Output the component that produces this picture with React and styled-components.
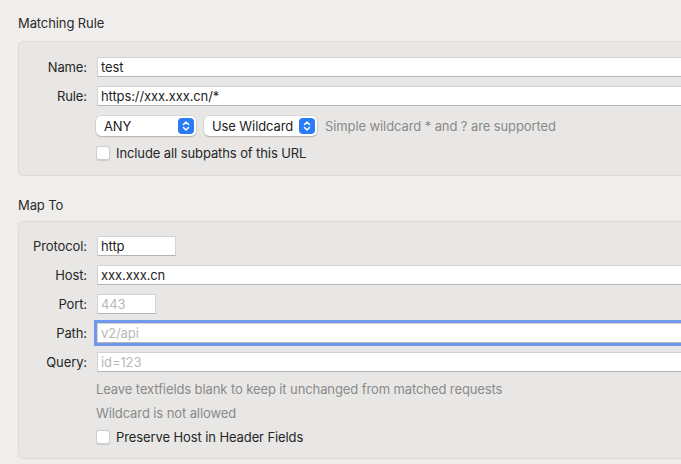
import React from "react";
import styled, { createGlobalStyle } from "styled-components";

const GlobalStyle = createGlobalStyle`
  html, body {
    margin: 0;
    padding: 0;
    background: #efeeec;
    overflow: hidden;
  }
  body {
    font-family: "Inter", "Liberation Sans", "Noto Sans", sans-serif;
    font-size: 13px;
    letter-spacing: -0.1px;
    color: #262626;
    -webkit-font-smoothing: antialiased;
  }
`;

const Page = styled.div`
  box-sizing: border-box;
  width: 100vw;
  height: 100vh;
  overflow: hidden;
  padding: 14px 0 0 18px;
`;

const SectionTitle = styled.div`
  height: 18px;
  line-height: 18px;
  font-size: 13px;
  color: #2b2b2b;
  margin-bottom: ${(p) => p.gap || 9}px;
`;

/* the panels run on past the right edge of the window */
const Panel = styled.div`
  width: calc(100% + 40px);
  box-sizing: border-box;
  background: #e8e7e5;
  border: 1px solid #dcdbd9;
  border-radius: 5px;
  padding: ${(p) => p.pad || "15px 0 14px"};
  margin-bottom: ${(p) => p.mb || 0}px;
  display: flex;
  flex-direction: column;
`;

const Row = styled.div`
  display: flex;
  align-items: center;
  height: ${(p) => p.h || 20}px;
  margin-top: ${(p) => (p.mt === undefined ? 9 : p.mt)}px;
  &:first-child {
    margin-top: 0;
  }
`;

const Label = styled.label`
  width: 68px;
  flex: none;
  text-align: right;
  margin-right: 10px;
  color: #262626;
  font-size: 13px;
`;

const Indent = styled.div`
  width: 77px;
  flex: none;
`;

const TextField = styled.input`
  box-sizing: border-box;
  height: 20px;
  width: ${(p) => (p.w ? `${p.w}px` : "auto")};
  flex: ${(p) => (p.w ? "none" : "1")};
  margin: 0;
  padding: 0 3px 0 3px;
  background: #ffffff;
  border: 1px solid #d4d3d1;
  border-bottom-color: #b5b4b2;
  border-radius: 0;
  font-family: inherit;
  font-size: 13px;
  letter-spacing: -0.1px;
  color: #1f1f1f;
  outline: none;
  box-shadow: ${(p) => (p.focused ? "0 0 0 3px #7199ea" : "none")};
  &::placeholder {
    color: #b9b9b9;
  }
`;

const PopUp = styled.div`
  box-sizing: border-box;
  width: ${(p) => p.w}px;
  height: 20px;
  margin-left: ${(p) => p.ml || 0}px;
  display: flex;
  align-items: center;
  justify-content: space-between;
  padding: 0 2px 0 8px;
  background: #ffffff;
  border-radius: 5px;
  box-shadow: 0 0 0 0.5px rgba(0, 0, 0, 0.12), 0 1px 1.5px rgba(0, 0, 0, 0.18);
  color: #222;
  font-size: 13px;
`;

const Stepper = styled.span`
  width: 16px;
  height: 16px;
  border-radius: 4px;
  background: #2a7cf6;
  display: flex;
  align-items: center;
  justify-content: center;
`;

const Hint = styled.span`
  color: #8a8a8a;
  font-size: 13px;
  margin-left: ${(p) => p.ml || 0}px;
  white-space: nowrap;
`;

const CheckRow = styled.label`
  display: flex;
  align-items: center;
  gap: 6px;
  font-size: 13px;
  color: #262626;
`;

const Box = styled.span`
  box-sizing: border-box;
  width: 14px;
  height: 14px;
  border-radius: 3px;
  background: #ffffff;
  border: 1px solid #cfcecc;
  box-shadow: 0 0.5px 1px rgba(0, 0, 0, 0.12);
`;

function Chevrons() {
  return (
    <svg width="10" height="12" viewBox="0 0 10 12" fill="none">
      <path
        d="M2.5 4.5 L5 2 L7.5 4.5"
        stroke="#fff"
        strokeWidth="1.5"
        strokeLinecap="round"
        strokeLinejoin="round"
      />
      <path
        d="M2.5 7.5 L5 10 L7.5 7.5"
        stroke="#fff"
        strokeWidth="1.5"
        strokeLinecap="round"
        strokeLinejoin="round"
      />
    </svg>
  );
}

function Select({ value, w, ml }) {
  return (
    <PopUp w={w} ml={ml}>
      <span>{value}</span>
      <Stepper>
        <Chevrons />
      </Stepper>
    </PopUp>
  );
}

function Field({ label, ...rest }) {
  return (
    <Row>
      <Label>{label}</Label>
      <TextField {...rest} />
    </Row>
  );
}

export default function App() {
  return (
    <Page>
      <GlobalStyle />
      <SectionTitle>Matching Rule</SectionTitle>
      <Panel mb={20}>
        <Field label="Name:" defaultValue="test" />
        <Field label="Rule:" defaultValue="https://xxx.xxx.cn/*" />
        <Row mt={10}>
          <Indent />
          <Select value="ANY" w={100} />
          <Select value="Use Wildcard" w={113} ml={8} />
          <Hint ml={8}>Simple wildcard * and ? are supported</Hint>
        </Row>
        <Row h={16} mt={9}>
          <Indent />
          <CheckRow>
            <Box />
            Include all subpaths of this URL
          </CheckRow>
        </Row>
      </Panel>

      <SectionTitle gap={7}>Map To</SectionTitle>
      <Panel pad="14px 0 13px">
        <Field label="Protocol:" defaultValue="http" w={79} />
        <Field label="Host:" defaultValue="xxx.xxx.cn" />
        <Field label="Port:" placeholder="443" w={59} />
        <Field label="Path:" placeholder="v2/api" focused />
        <Field label="Query:" placeholder="id=123" />
        <Row h={16} mt={9}>
          <Indent />
          <Hint>Leave textfields blank to keep it unchanged from matched requests</Hint>
        </Row>
        <Row h={16} mt={8}>
          <Indent />
          <Hint>Wildcard is not allowed</Hint>
        </Row>
        <Row h={16} mt={8}>
          <Indent />
          <CheckRow>
            <Box />
            Preserve Host in Header Fields
          </CheckRow>
        </Row>
      </Panel>
    </Page>
  );
}
